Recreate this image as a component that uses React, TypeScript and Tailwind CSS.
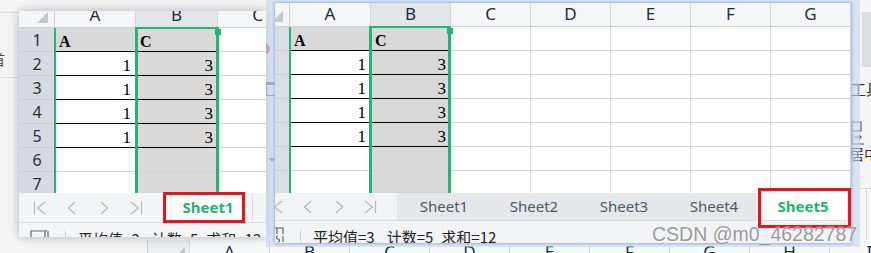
import clsx from 'clsx'

type Col = { label: string; width: string; selected?: boolean }

const leftCols: Col[] = [
  { label: 'A', width: 'w-[81px]' },
  { label: 'B', width: 'w-[82px]', selected: true },
  { label: 'C', width: 'w-[80px]' },
]

const rightCols: Col[] = [
  { label: 'A', width: 'w-[81px]' },
  { label: 'B', width: 'w-[80px]', selected: true },
  { label: 'C', width: 'w-[80px]' },
  { label: 'D', width: 'w-[80px]' },
  { label: 'E', width: 'w-[80px]' },
  { label: 'F', width: 'w-[80px]' },
  { label: 'G', width: 'w-[80px]' },
]

const data = [['A', 'C'], ['1', '3'], ['1', '3'], ['1', '3'], ['1', '3'], [], []]

const behindCols = ['A', 'B', 'C', 'D', 'E', 'F', 'G', 'H', 'I']

const cjk = "font-['Noto_Sans_CJK_SC',sans-serif]"

// 工作表导航按钮
function NavIcon({ kind }: { kind: 'first' | 'prev' | 'next' | 'last' }) {
  const d = {
    first: 'M1.5 1v12M12 1L4.5 7l7.5 6',
    prev: 'M10 1L3.5 7l6.5 6',
    next: 'M4 1l6.5 6L4 13',
    last: 'M2 1l7.5 6L2 13M12.5 1v12',
  }[kind]
  return (
    <svg width="14" height="14" viewBox="0 0 14 14" fill="none" stroke="#b1b5bc" strokeWidth="1.2">
      <path d={d} />
    </svg>
  )
}

function Grid({ cols, headW, headBg, rowsH, numbers }: { cols: Col[]; headW: string; headBg: string; rowsH: string; numbers: boolean }) {
  return (
    <>
      {/* 列标题 */}
      <div className="flex h-[24px] shrink-0 border-b border-b-[#cdd1d8]">
        <div className={clsx(headW, 'relative shrink-0 bg-[#f4f5f7] border-r border-r-[#cdd1d8]')}>
          <svg className="absolute right-[6px] bottom-[4px]" width="11" height="11">
            <polygon points="11,0 11,11 0,11" fill="#c4c8ce" />
          </svg>
        </div>
        {cols.map((c) => (
          <div
            key={c.label}
            className={clsx(
              c.width,
              'shrink-0 flex items-center justify-center pb-[2px] text-[17px] text-[#1d2b3d] border-r border-r-[#d3d6dc]',
              c.selected ? 'bg-[#e3e5e9]' : 'bg-[#f5f6f8]'
            )}
          >
            {c.label}
          </div>
        ))}
      </div>

      {/* 行 */}
      <div className={clsx(rowsH, 'shrink-0 overflow-hidden')}>
        {data.map((row, r) => (
          <div key={r} className="flex h-[24px]">
            <div className={clsx(headW, headBg, 'shrink-0 flex items-center justify-center text-[16px] text-[#2b2f36] border-b border-b-[#c9cdd5]')}>
              {numbers ? r + 1 : null}
            </div>
            {cols.map((c, i) => {
              const inData = r < 5 && i < 2
              const gray = c.selected || (r === 0 && i === 0)
              return (
                <div
                  key={c.label}
                  className={clsx(
                    c.width,
                    "shrink-0 flex items-end leading-none px-[4px] border-r border-r-[#d3d6dc] border-b font-['Liberation_Serif',serif] text-black",
                    inData ? 'border-b-black' : 'border-b-[#d3d6dc]',
                    gray ? 'bg-[#d9d9d9]' : 'bg-white',
                    r === 0 ? 'justify-start font-bold text-[16px] pb-[1px]' : 'justify-end text-[17px] pb-[1px]'
                  )}
                >
                  {row[i] ?? ''}
                </div>
              )
            })}
          </div>
        ))}
      </div>
    </>
  )
}

function StatusText() {
  return (
    <div className={clsx(cjk, 'flex text-[15px] leading-none text-[#222]')}>
      <span>平均值=3</span>
      <span className="ml-[12px]">计数=5</span>
      <span className="ml-[8px]">求和=12</span>
    </div>
  )
}

function LeftWindow() {
  return (
    <div className="absolute left-[19px] top-[11px] w-[247px] h-[226px] overflow-hidden bg-white shadow-[0_0_10px_rgba(0,0,0,0.28)]">
      <div className="flex flex-col mt-[-7px]">
        <Grid cols={leftCols} headW="w-[36px]" headBg="bg-[#d6dae1]" rowsH="h-[165px]" numbers />

        {/* 工作表标签 */}
        <div className="flex h-[29px] shrink-0 items-center bg-[#f3f4f6]">
          <div className="flex pl-[5px]">
            <div className="w-[32px] flex justify-center"><NavIcon kind="first" /></div>
            <div className="w-[32px] flex justify-center"><NavIcon kind="prev" /></div>
            <div className="w-[32px] flex justify-center"><NavIcon kind="next" /></div>
            <div className="w-[32px] flex justify-center"><NavIcon kind="last" /></div>
          </div>
          <div className="ml-[16px] w-[80px] h-full bg-white flex items-center justify-center text-[15px] font-bold text-[#1db574]">
            Sheet1
          </div>
          <div className="ml-[4px] w-px h-[24px] bg-[#d5d8dd]" />
        </div>

        {/* 状态栏 */}
        <div className="flex h-[22px] shrink-0 bg-[#f4f5f7] border-t border-t-[#dcdfe4] pt-[8px]">
          <svg className="ml-[11px] mt-[-1px]" width="20" height="14" viewBox="0 0 20 14" fill="none" stroke="#666" strokeWidth="1.2">
            <path d="M1 1h14v12H1zM15 1l2-0.5M18 1v12" />
          </svg>
          <div className="ml-[15px] w-px h-[14px] bg-[#d0d3d8]" />
          <div className="ml-[12px]"><StatusText /></div>
        </div>
      </div>

      {/* 选区 */}
      <div className="absolute left-[35px] top-[17px] w-[2px] h-[165px] bg-[#21b577]" />
      <div className="absolute left-[116px] top-[16px] w-[3px] h-[166px] bg-[#21b577]" />
      <div className="absolute left-[197px] top-[16px] w-[3px] h-[166px] bg-[#21b577]" />
      <div className="absolute left-[116px] top-[16px] w-[84px] h-[2px] bg-[#21b577]" />
      <div className="absolute left-[196px] top-[18px] w-[6px] h-[6px] bg-[#21b577]" />
    </div>
  )
}

function RightWindow() {
  const tabs = ['Sheet1', 'Sheet2', 'Sheet3', 'Sheet4']
  return (
    <div className="absolute left-[266px] top-0 w-[594px] h-[247px] bg-[rgba(196,213,238,0.6)] pl-[9px] pt-[3px]">
      <div className="relative w-[576px] h-[240px] bg-white overflow-hidden flex flex-col shadow-[0_0_2px_1px_rgba(140,175,225,0.85)]">
        <Grid cols={rightCols} headW="w-[15px]" headBg="bg-[#dadde3]" rowsH="h-[166px]" numbers={false} />

        <div className="flex h-[27px] shrink-0">
          <div className="w-[122px] bg-[#f2f3f5] flex items-center">
            <div className="flex ml-[-14px]">
              <div className="w-[31px] flex justify-center"><NavIcon kind="first" /></div>
              <div className="w-[31px] flex justify-center"><NavIcon kind="prev" /></div>
              <div className="w-[31px] flex justify-center"><NavIcon kind="next" /></div>
              <div className="w-[31px] flex justify-center"><NavIcon kind="last" /></div>
            </div>
          </div>
          <div className="flex-1 flex bg-[#e5e7eb] pl-[2px]">
            {tabs.map((t) => (
              <div key={t} className="w-[90px] flex items-center justify-center text-[15px] text-[#4e5968]">
                {t}
              </div>
            ))}
            <div className="w-[88px] bg-white flex items-center justify-center text-[15px] font-bold text-[#1db574]">
              Sheet5
            </div>
          </div>
        </div>

        <div className="flex h-[23px] shrink-0 bg-[#f2f3f5] border-t border-t-[#d9dce1] pt-[8px]">
          <svg className="ml-[-4px] mt-[-2px]" width="14" height="16" viewBox="0 0 14 16" fill="none" stroke="#555" strokeWidth="1.1">
            <path d="M1 1h11v6M6 1v6M12 9v6M7 9c-2 0-2 3 0 3s2 3 0 3" />
          </svg>
          <div className="ml-[15px] w-px h-[15px] bg-[#d0d3d8]" />
          <div className="ml-[12px]"><StatusText /></div>
        </div>

        {/* 选区 */}
        <div className="absolute left-[14px] top-[24px] w-[2px] h-[166px] bg-[#21b577]" />
        <div className="absolute left-[94px] top-[23px] w-[3px] h-[167px] bg-[#21b577]" />
        <div className="absolute left-[173px] top-[23px] w-[3px] h-[167px] bg-[#21b577]" />
        <div className="absolute left-[94px] top-[23px] w-[82px] h-[2px] bg-[#21b577]" />
        <div className="absolute left-[172px] top-[25px] w-[6px] h-[6px] bg-[#21b577]" />
      </div>
    </div>
  )
}

function Backdrop() {
  return (
    <>
      <div className="absolute left-0 top-[12px] w-[19px] h-px bg-[#dedfe1]" />
      <div className="absolute left-0 top-[77px] w-[19px] h-px bg-[#dedfe1]" />
      <div className={clsx(cjk, 'absolute left-[-9px] top-[49px] text-[14px] text-[#444]')}>首</div>

      <div className="absolute left-[258px] top-[43px] w-[12px] h-[12px] rounded-full bg-[#e2654f]" />
      <div className="absolute left-[266px] top-[82px] w-[12px] h-[14px] border border-[#6b6f76] border-t-[3px]" />
      <svg className="absolute left-[269px] top-[158px]" width="6" height="4">
        <polygon points="0,0 6,0 3,4" fill="#5b6f8e" />
      </svg>

      {/* 右侧功能区残影 */}
      <div className="absolute left-[862px] top-[12px] w-[12px] h-[55px] bg-[#dcdde1]" />
      <div className={clsx(cjk, 'absolute left-[851px] top-[81px] text-[15px] leading-none text-[#333] whitespace-nowrap')}>工具</div>
      <svg className="absolute left-[851px] top-[121px]" width="14" height="24" viewBox="0 0 14 24" fill="none" stroke="#555" strokeWidth="1.1">
        <path d="M1 1h9v9H1zM1 11v12h12M3 16h7M8 14l2 2-2 2" />
      </svg>
      <div className={clsx(cjk, 'absolute left-[849px] top-[146px] text-[15px] leading-none text-[#333] whitespace-nowrap')}>居中</div>
      <div className="absolute left-[858px] top-[188px] w-[14px] h-px bg-[#d3d6dc]" />
      <div className="absolute left-[866px] top-[188px] w-px h-[60px] bg-[#d3d6dc]" />

      {/* 后面表格的列标题 */}
      <div className="absolute left-[147px] top-[240px] flex h-[24px] border-l border-l-[#c8ccd3]">
        <div className="relative w-[42px] bg-[#eceef1] border-r border-r-[#d3d6dc]">
          <svg className="absolute right-[4px] top-[7px]" width="10" height="10">
            <polygon points="10,0 10,10 0,10" fill="#c4c8ce" />
          </svg>
        </div>
        {behindCols.map((c) => (
          <div key={c} className="w-[80px] flex items-center justify-center bg-[#f7f8fa] border-r border-r-[#d3d6dc] text-[17px] text-[#1d2b3d]">
            {c}
          </div>
        ))}
      </div>
    </>
  )
}

export default function App() {
  return (
    <div className="relative w-[871px] h-[253px] overflow-hidden bg-[#f5f5f6] font-['Noto_Sans',sans-serif]">
      <Backdrop />
      <LeftWindow />
      <RightWindow />

      {/* 红框标注 */}
      <div className="absolute left-[163px] top-[192px] w-[82px] h-[31px] border-[3px] border-[#e8141b]" />
      <div className="absolute left-[758px] top-[188px] w-[93px] h-[40px] border-[3px] border-[#e8141b]" />

      <div className="absolute left-[652px] top-[225px] text-[19.5px] leading-none text-[#9a9a9a] font-['Liberation_Sans',sans-serif] whitespace-nowrap [text-shadow:0_0_2px_#fff]">
        CSDN @m0_46282787
      </div>
    </div>
  )
}
